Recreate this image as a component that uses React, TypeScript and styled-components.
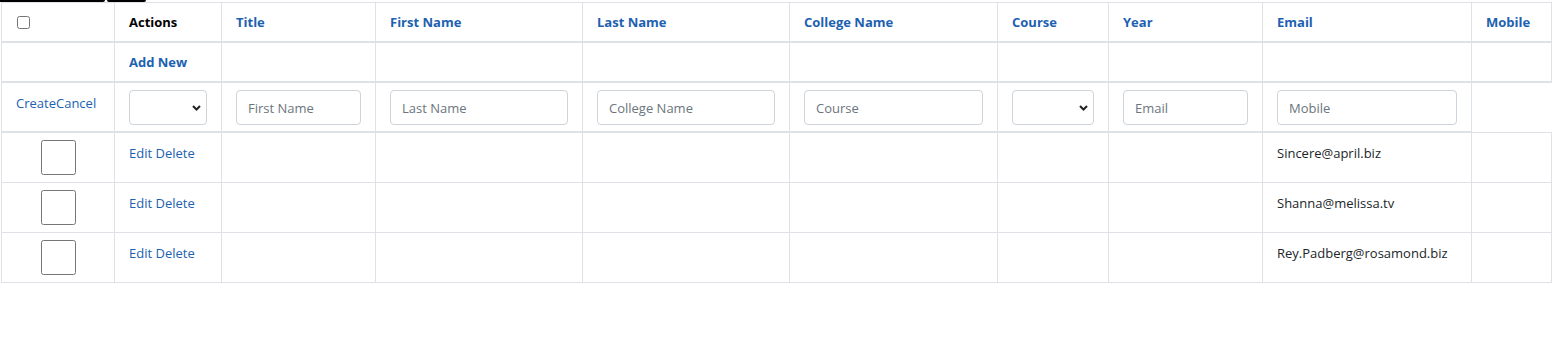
import React from "react";
import styled, { createGlobalStyle } from "styled-components";

const GlobalStyle = createGlobalStyle`
  body {
    margin: 0;
    background: #fff;
    font-family: "Open Sans", "Noto Sans", sans-serif;
  }
`;

const Page = styled.div`
  padding-left: 1px;
`;

// bottoms of the toolbar buttons that are scrolled away above the table
const TopStrip = styled.div`
  display: flex;
  gap: 2px;
  height: 2px;
  margin-left: -1px;
`;

const StripBar = styled.div<{ $w: number; $first?: boolean }>`
  width: ${({ $w }) => $w}px;
  height: 2px;
  background: #000;
  border-radius: ${({ $first }) => ($first ? "0 0 4px 0" : "0 0 4px 4px")};
`;

const Table = styled.table`
  border-collapse: collapse;
  table-layout: fixed;
  width: 1550px;
  font-size: 13px;
  color: #212529;
`;

const Th = styled.th<{ $dark?: boolean }>`
  text-align: left;
  font-weight: 700;
  color: ${({ $dark }) => ($dark ? "#000" : "#1d61b1")};
  padding: 9px 14px;
  line-height: 20px;
  height: 20px;
  border: 1px solid #dee2e6;
  border-bottom-width: 2px;
  vertical-align: top;
`;

const EditCell = styled.th<{ $text?: boolean }>`
  text-align: left;
  font-weight: 400;
  padding: ${({ $text }) => ($text ? "10px 14px 6px" : "7px 14px 6px")};
  line-height: 20px;
  border: 1px solid #dee2e6;
  border-bottom-width: 2px;
  vertical-align: top;
`;

const Td = styled.td<{ $center?: boolean }>`
  padding: ${({ $center }) => ($center ? "7px 14px 7px" : "10px 14px")};
  line-height: 20px;
  border: 1px solid #dee2e6;
  vertical-align: top;
  text-align: ${({ $center }) => ($center ? "center" : "left")};
`;

const LinkText = styled.a`
  color: #1d61b1;
  text-decoration: none;
  cursor: pointer;
`;

const HeadCheck = styled.input`
  width: 13px;
  height: 13px;
  margin: 4px 0 0 1px;
  vertical-align: top;
`;

const BigCheck = styled.input`
  display: block;
  width: 35px;
  height: 35px;
  margin: 0 auto;
`;

const TextInput = styled.input`
  box-sizing: border-box;
  width: 100%;
  height: 35px;
  padding: 0 11px;
  border: 1px solid #ced4da;
  border-radius: 4px;
  font-family: inherit;
  font-size: 13px;
  color: #212529;
  display: block;

  &::placeholder {
    color: #6c757d;
  }
`;

const SelectWrap = styled.div`
  position: relative;
  height: 35px;
`;

const Select = styled.select`
  box-sizing: border-box;
  width: 100%;
  height: 35px;
  border: 1px solid #ced4da;
  border-radius: 4px;
  background: #fff;
  appearance: none;
  font-family: inherit;
  font-size: 13px;
  display: block;
`;

const Chevron = styled.svg`
  position: absolute;
  right: 6px;
  top: 15px;
  pointer-events: none;
`;

const cols = [113, 107, 154, 207, 207, 208, 111, 154, 209, 80];

const headers = [
  "Title",
  "First Name",
  "Last Name",
  "College Name",
  "Course",
  "Year",
  "Email",
  "Mobile",
];

const rows = [
  { email: "Sincere@april.biz" },
  { email: "Shanna@melissa.tv" },
  { email: "Rey.Padberg@rosamond.biz" },
];

const DropDown = () => (
  <SelectWrap>
    <Select defaultValue="">
      <option value=""></option>
    </Select>
    <Chevron width="9" height="6" viewBox="0 0 9 6">
      <path d="M1 1 L4.5 4.5 L8 1" fill="none" stroke="#222" strokeWidth="2" />
    </Chevron>
  </SelectWrap>
);

export default function App() {
  return (
    <Page>
      <GlobalStyle />
      <TopStrip>
        <StripBar $w={105} $first />
        <StripBar $w={39} />
      </TopStrip>
      <Table>
        <colgroup>
          {cols.map((w, i) => (
            <col key={i} style={{ width: w }} />
          ))}
        </colgroup>
        <thead>
          <tr>
            <Th>
              <HeadCheck type="checkbox" />
            </Th>
            <Th $dark>Actions</Th>
            {headers.map((h) => (
              <Th key={h}>{h}</Th>
            ))}
          </tr>
          <tr>
            <Th />
            <Th>Add New</Th>
            {headers.map((h) => (
              <Th key={h} />
            ))}
          </tr>
          <tr>
            <EditCell $text>
              <LinkText>Create</LinkText>
              <LinkText>Cancel</LinkText>
            </EditCell>
            <EditCell>
              <DropDown />
            </EditCell>
            <EditCell>
              <TextInput placeholder="First Name" />
            </EditCell>
            <EditCell>
              <TextInput placeholder="Last Name" />
            </EditCell>
            <EditCell>
              <TextInput placeholder="College Name" />
            </EditCell>
            <EditCell>
              <TextInput placeholder="Course" />
            </EditCell>
            <EditCell>
              <DropDown />
            </EditCell>
            <EditCell>
              <TextInput placeholder="Email" />
            </EditCell>
            <EditCell>
              <TextInput placeholder="Mobile" />
            </EditCell>
          </tr>
        </thead>
        <tbody>
          {rows.map((r) => (
            <tr key={r.email}>
              <Td $center>
                <BigCheck type="checkbox" />
              </Td>
              <Td>
                <LinkText>Edit</LinkText> <LinkText>Delete</LinkText>
              </Td>
              <Td />
              <Td />
              <Td />
              <Td />
              <Td />
              <Td />
              <Td>{r.email}</Td>
              <Td />
            </tr>
          ))}
        </tbody>
      </Table>
    </Page>
  );
}
